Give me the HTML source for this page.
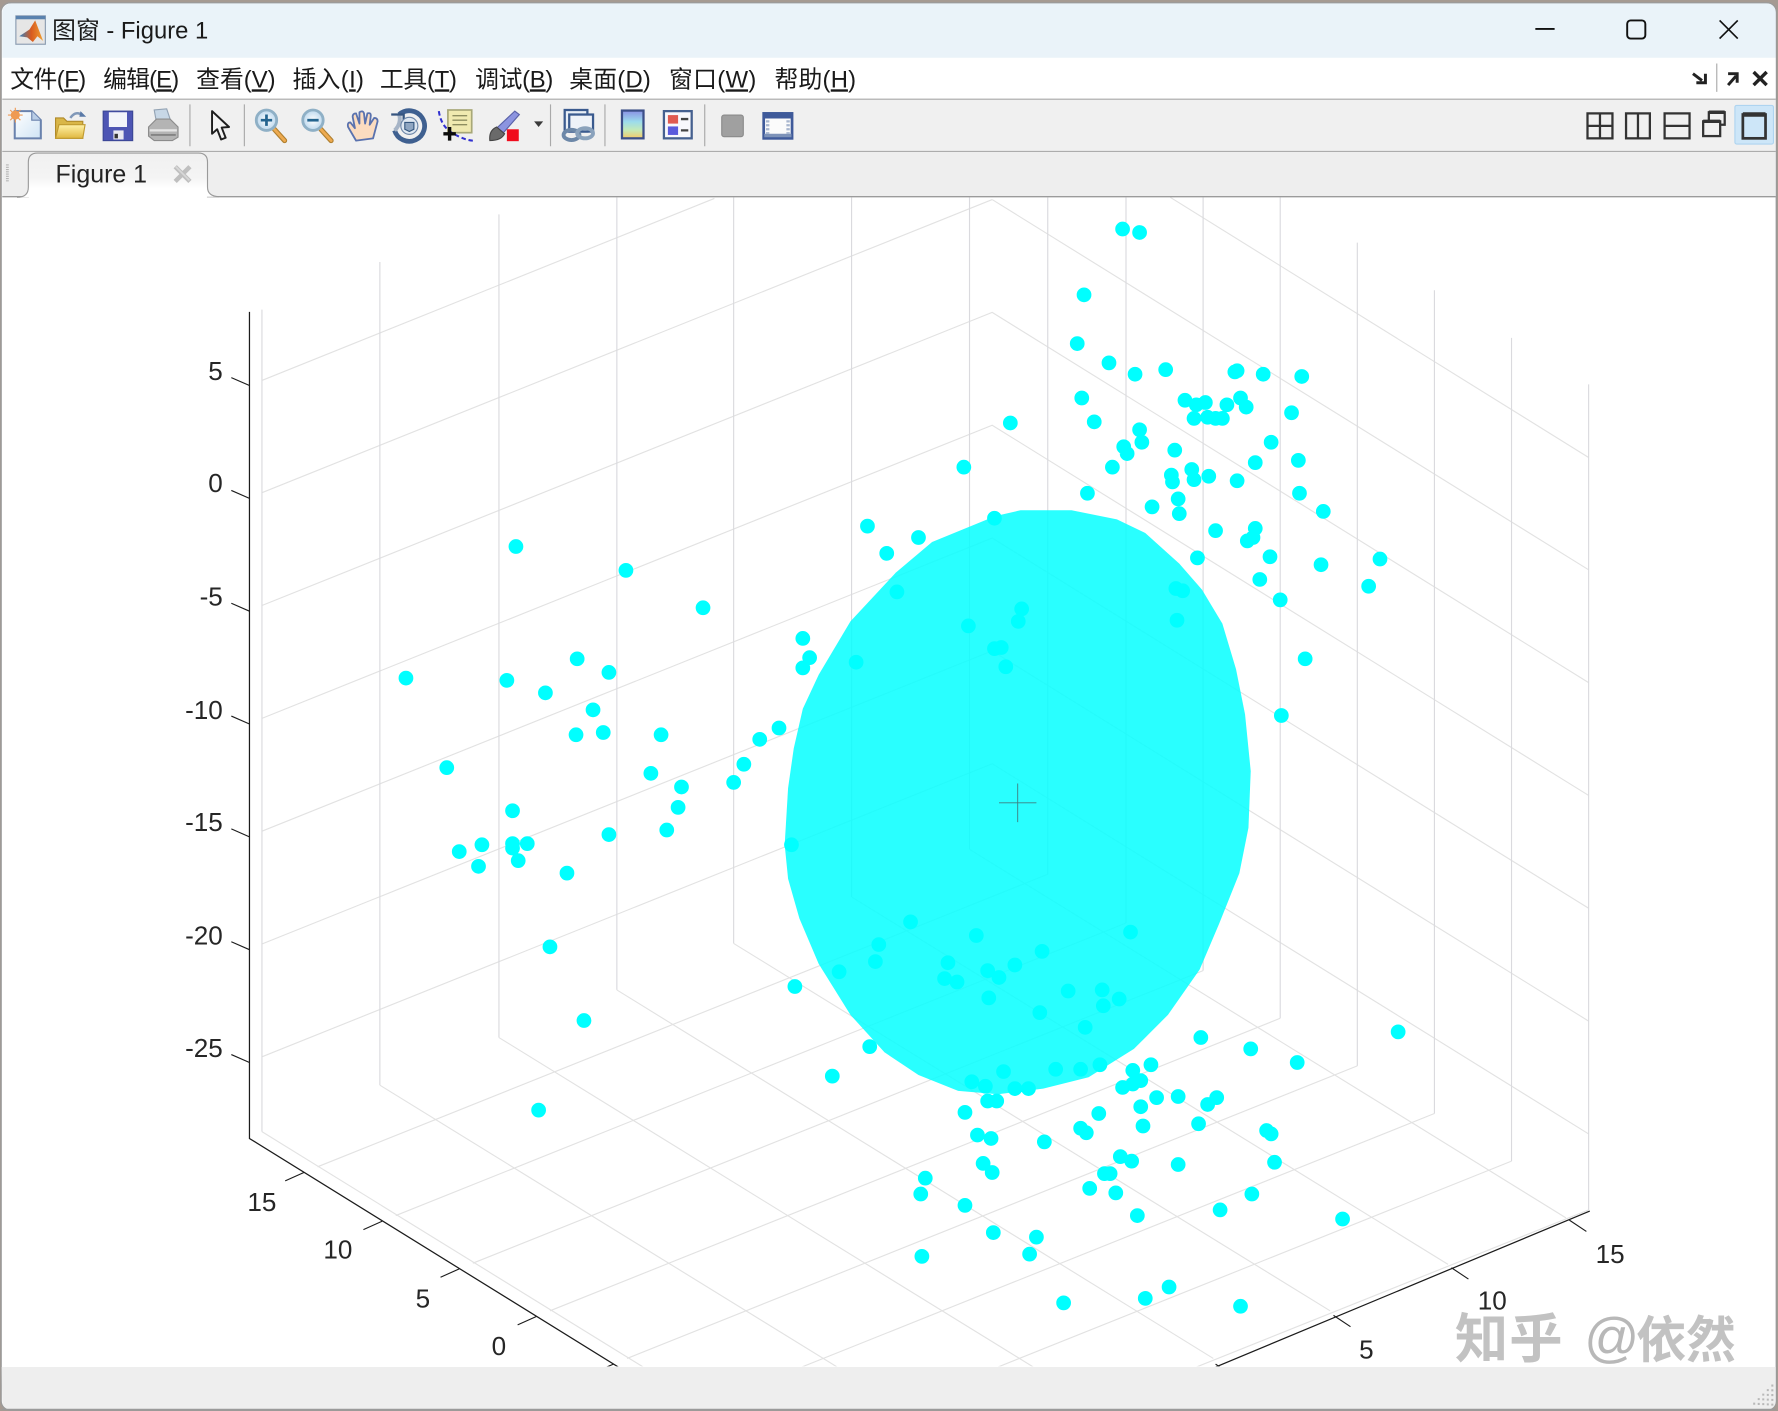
<!DOCTYPE html>
<html><head><meta charset="utf-8"><title>图窗 - Figure 1</title>
<style>html,body{margin:0;padding:0;background:#fff;width:1778px;height:1411px;overflow:hidden}svg{display:block}
text{font-family:"Liberation Sans","Noto Sans CJK SC",sans-serif}</style></head>
<body>
<svg xmlns="http://www.w3.org/2000/svg" width="1778" height="1411" viewBox="0 0 1568 1244.34">
<defs>
<clipPath id="plot"><rect x="0" y="174" width="1568" height="1031"/></clipPath>
<linearGradient id="tabg" x1="0" y1="0" x2="0" y2="1"><stop offset="0" stop-color="#f0f0f0"/><stop offset=".55" stop-color="#f4f4f4"/><stop offset=".8" stop-color="#fff"/></linearGradient>
<linearGradient id="cb" x1="0" y1="0" x2="0" y2="1"><stop offset="0" stop-color="#8a90e4"/><stop offset=".4" stop-color="#9cdcec"/><stop offset=".7" stop-color="#c4eab8"/><stop offset="1" stop-color="#f4c868"/></linearGradient>
<linearGradient id="doc" x1="0" y1="0" x2="1" y2="1"><stop offset="0" stop-color="#fff"/><stop offset="1" stop-color="#cfe4f5"/></linearGradient>
<linearGradient id="fold" x1="0" y1="0" x2="0" y2="1"><stop offset="0" stop-color="#fff2a8"/><stop offset="1" stop-color="#e0b840"/></linearGradient>
<linearGradient id="mat" x1="0" y1="0" x2="1" y2="0"><stop offset="0" stop-color="#2f7fc0"/><stop offset=".5" stop-color="#d85a20"/><stop offset="1" stop-color="#f0a030"/></linearGradient>
<radialGradient id="lens"><stop offset="0" stop-color="#fff"/><stop offset="1" stop-color="#bcd8ee"/></radialGradient>
</defs>
<rect width="1568" height="1244.34" fill="#a59a92"/>
<rect x="1" y="2.500" width="1565.500" height="1241" rx="8" fill="#fff" stroke="#9a9a9a" stroke-width="1.200"/>

<!-- plot -->
<g clip-path="url(#plot)" fill="none">
<g stroke="#e2e2e2" stroke-width="1">
<path d="M231 335.500L630 175M875 176L1401 502.500"/>
<path d="M231 434.500L875 176M231 534L875 275.500L1401 602M231 633.500L875 375L1401 701.500M231 733L875 474.500L1401 801M231 832.500L875 574L1401 900.500M231 932L875 673.500L1401 1000M1032 174L1401 403.500"/>
<path d="M924 771L280 1029M993 814L349 1072M1061 856L417 1114M1129 898L485 1156M1197 940L553 1198M1265 982L706 1206M1333 1024L879 1206M1401 1067L1054 1206"/>
<path d="M231 998L568 1206M335 957L739 1206M440 915L912 1206M544 873L1070 1198M647 832L1173 1156M751 791L1277 1115M855 749L1381 1074"/>
</g>
<path stroke="#dadade" stroke-width="1" d="M231 273V998M335 231V957M440 189V915M544 174V873M647 174V832M751 174V791M855 174V749M924 174V771M993 174V814M1061 174V856M1129 174V898M1197 214V940M1265 256V982M1333 298V1024M1401 339V1067"/>
<path stroke="#1c1c1c" stroke-width="1.100" d="M220 275V1004L546 1206M1402 1068L1071 1206"/>
<path stroke="#1c1c1c" stroke-width="1" d="M220 340L204 333M220 439.500L204 432.500M220 539L204 532M220 638.500L204 631.500M220 738L204 731M220 837.500L204 830.500M220 937L204 930M268 1034L251.500 1041.400M337 1077L320.500 1084.400M405 1119L388.500 1126.400M473 1161L456.500 1168.400M541 1203L534 1206M1384 1076L1399 1086M1280 1118L1295 1128M1176 1160L1191 1170M1072 1203L1076.500 1206"/>
<!-- dots -->
<path stroke="#00ffff" stroke-width="13" stroke-linecap="round" d="M990 202h0M1005 205h0M956 260h0M950 303h0M978 320h0M1001 330h0M1028 326h0M1089 328h0M1091 327h0M1114 330h0M1148 332h0M954 351h0M1045 353h0M1055 357h0M1063 355h0M1082 357h0M1094 351h0M1099 359h0M1139 364h0M965 372h0M1053 369h0M1065 368h0M1072 369h0M1078 369h0M1005 379h0M891 373h0M1121 390h0M991 394h0M1007 390h0M994 400h0M1036 397h0M1107 408h0M1145 406h0M981 412h0M850 412h0M1051 414h0M1033 419h0M1034 425h0M1053 423h0M1066 420h0M1091 424h0M1146 435h0M959 435h0M1039 440h0M1016 447h0M1040 453h0M1167 451h0M877 457h0M765 464h0M1072 468h0M1107 466h0M1105 474h0M1100 477h0M810 474h0M782 488h0M1120 491h0M1056 492h0M1217 493h0M1165 498h0M1111 511h0M1207 517h0M1037 519h0M1043 521h0M791 522h0M1129 529h0M901 537h0M898 548h0M854 552h0M1038 547h0M708 563h0M877 572h0M883 571h0M714 580h0M755 584h0M887 588h0M708 589h0M1151 581h0M1130 631h0M455 482h0M552 503h0M620 536h0M358 598h0M509 581h0M537 593h0M447 600h0M481 611h0M523 626h0M508 648h0M532 646h0M583 648h0M394 677h0M574 682h0M601 694h0M647 690h0M656 674h0M670 652h0M687 642h0M598 712h0M588 732h0M537 736h0M452 715h0M405 751h0M425 745h0M452 744h0M452 748h0M465 744h0M457 759h0M422 764h0M500 770h0M485 835h0M515 900h0M475 979h0M698 745h0M803 813h0M775 833h0M772 848h0M740 857h0M701 870h0M861 825h0M836 849h0M919 839h0M997 822h0M895 851h0M871 856h0M881 862h0M833 863h0M844 866h0M872 880h0M942 874h0M972 873h0M987 881h0M973 887h0M917 893h0M957 906h0M767 923h0M734 949h0M1233 910h0M1059 915h0M1103 925h0M1144 937h0M1015 939h0M999 944h0M970 939h0M953 943h0M931 943h0M885 945h0M857 954h0M1006 953h0M999 956h0M990 959h0M869 958h0M895 960h0M907 960h0M1020 968h0M1039 967h0M1073 968h0M1065 974h0M1006 976h0M871 971h0M879 971h0M851 981h0M969 982h0M1057 991h0M1008 993h0M953 995h0M958 999h0M1117 997h0M1121 1000h0M862 1001h0M874 1004h0M921 1007h0M867 1026h0M875 1034h0M988 1020h0M998 1024h0M1039 1027h0M1124 1025h0M974 1035h0M979 1035h0M816 1039h0M812 1053h0M961 1048h0M984 1052h0M1104 1053h0M851 1063h0M1076 1067h0M1003 1072h0M1184 1075h0M876 1087h0M914 1091h0M908 1106h0M813 1108h0M938 1149h0M1010 1145h0M1031 1135h0M1094 1152h0"/>
<!-- ellipsoid -->
<path fill="#00ffff" fill-opacity=".84" stroke="none" d="M878 455L900 450L945 450L985 458L1010 470L1040 497L1060 520L1078 550L1090 590L1098 630L1103 680L1101 730L1093 770L1075 815L1058 855L1030 895L1000 925L960 950L920 960L880 965L845 962L810 948L780 928L750 895L722 850L705 810L695 775L692 745L695 695L700 660L708 625L722 595L750 548L790 505L822 478Z"/>
<path stroke="#3f7f80" stroke-width=".8" d="M881 708H914M897.500 691V725"/>
</g>

<!-- tick labels -->
<g fill="#262626" font-size="23">
<g text-anchor="end"><text x="196.500" y="335">5</text><text x="196.500" y="434">0</text><text x="196.500" y="534">-5</text><text x="196.500" y="634">-10</text><text x="196.500" y="733">-15</text><text x="196.500" y="833">-20</text><text x="196.500" y="932">-25</text></g>
<g text-anchor="middle"><text x="231" y="1068">15</text><text x="298" y="1110">10</text><text x="373" y="1153">5</text><text x="440" y="1195">0</text><text x="1420" y="1114">15</text><text x="1316" y="1155">10</text><text x="1205" y="1198">5</text></g>
</g>
<!-- watermark -->
<g fill="#c2c2c2">
<text x="1283" y="1197" font-size="47" letter-spacing="1" font-weight="700">知乎</text>
<text x="1397" y="1196" font-size="48" fill="#b8b8b8">@</text>
<text x="1443" y="1197" font-size="44" font-weight="700">依然</text>
</g>

<!-- status -->
<path d="M1.500 1205.500H1566V1236a7 7 0 0 1-7 7H9a7 7 0 0 1-7-7Z" fill="#eeeeee"/>
<path d="M1.500 1243H1566" stroke="#9a9a9a" stroke-width="1.200"/>
<g stroke="#b8b8b8" stroke-width="1.800" stroke-dasharray="1.800 2.400" fill="none"><path d="M1563 1221V1240M1559 1225V1240M1555 1229V1240M1551 1233V1240M1547 1237V1240"/></g>

<!-- title bar -->
<path d="M2 51V11a8 8 0 0 1 8-8H1558a8 8 0 0 1 8 8V51Z" fill="#eaf3f9"/>
<rect x="14" y="14" width="26" height="25" fill="#e6e6e6" stroke="#8a9bb0"/>
<rect x="14" y="14" width="26" height="3" fill="#5a82ae"/>
<path d="M17 32L26 26L31 18L38 36L33 32L29 37L24 33Z" fill="url(#mat)"/>
<text x="46" y="34" font-size="21" fill="#1a1a1a">图窗 - Figure 1</text>
<path d="M1354 25.500H1371" stroke="#111" stroke-width="1.700"/>
<rect x="1435" y="18" width="16" height="16" rx="3" fill="none" stroke="#111" stroke-width="1.700"/>
<path d="M1516.500 18L1532.500 34M1532.500 18L1516.500 34" stroke="#111" stroke-width="1.500"/>

<!-- menu -->
<rect x="2" y="51" width="1564" height="36" fill="#fff"/>
<g font-size="21" fill="#1a1a1a">
<text x="9" y="77" textLength="67">文件(<tspan text-decoration="underline">F</tspan>)</text>
<text x="91" y="77" textLength="67">编辑(<tspan text-decoration="underline">E</tspan>)</text>
<text x="173" y="77" textLength="70">查看(<tspan text-decoration="underline">V</tspan>)</text>
<text x="258" y="77" textLength="63">插入(<tspan text-decoration="underline">I</tspan>)</text>
<text x="335" y="77" textLength="68">工具(<tspan text-decoration="underline">T</tspan>)</text>
<text x="419" y="77" textLength="69">调试(<tspan text-decoration="underline">B</tspan>)</text>
<text x="502" y="77" textLength="72">桌面(<tspan text-decoration="underline">D</tspan>)</text>
<text x="590" y="77" textLength="77">窗口(<tspan text-decoration="underline">W</tspan>)</text>
<text x="683" y="77" textLength="72">帮助(<tspan text-decoration="underline">H</tspan>)</text>
</g>
<g fill="none" stroke="#222">
<path d="M1493 65L1501 71M1504 65V73H1496" stroke-width="2.600"/>
<path d="M1514 56V81" stroke="#aaa" stroke-width="1"/>
<path d="M1524 75L1531 67M1524 65H1532V73" stroke-width="2.600"/>
<path d="M1546.500 63.500L1558 75M1558 63.500L1546.500 75" stroke-width="3"/>
</g>

<!-- toolbar -->
<rect x="2" y="87.500" width="1564" height="46" fill="#f0f0f0"/>
<path d="M2 87.500H1566M2 133.500H1566" stroke="#a8a8a8" stroke-width="1"/>
<g stroke="#a9a9a9" stroke-width="1"><path d="M167.500 92V129M215.500 92V129M485.500 92V129M533.500 92V129M621.500 92V129"/></g>

<!-- new -->
<path d="M13 98H28L36 106V122H13Z" fill="url(#doc)" stroke="#6a82ad" stroke-width="1.800"/><path d="M28 98V106H36" fill="#b9cde6" stroke="#6a82ad"/>
<circle cx="13.500" cy="101.500" r="4" fill="#f09a50"/><path d="M13.500 95V108M7 101.500H20M9 97L18 106M18 97L9 106" stroke="#ee9a55" stroke-width="1"/>
<!-- open -->
<path d="M49 122V104H56L59 107H73V122Z" fill="#d9b648" stroke="#b08a2a"/><path d="M49 122L52 110H75L73 122Z" fill="url(#fold)" stroke="#c09a30"/>
<path d="M62 104Q67 97 73 102" fill="none" stroke="#8098b8" stroke-width="2.200"/><path d="M71 98L76 103H70Z" fill="#5a7aa8"/>
<!-- save -->
<rect x="91" y="98" width="26" height="26" fill="#4d55b4" stroke="#3c4796"/><rect x="96" y="99" width="16" height="13" fill="#f2f4fa"/><rect x="100" y="115" width="9" height="8" fill="#e8e8f0"/><rect x="101" y="118" width="3" height="4" fill="#333"/>
<!-- print -->
<path d="M136 97L147 96L151 108H138Z" fill="#c7d7e6" stroke="#93a3b4"/><path d="M131 112L138 105H150L157 112V121L152 124H136L131 120Z" fill="#b4b4b4" stroke="#8c8c8c"/><path d="M132 115H156" stroke="#e6e6e6" stroke-width="2"/><path d="M133 119H155" stroke="#7d7d7d" stroke-width="1.500"/>
<!-- arrow -->
<path d="M187 98L187 118L191.500 114L195 123L199 121.500L195.500 112.500L202 112Z" fill="#f4f4f4" stroke="#1e1e1e" stroke-width="1.700" stroke-linejoin="round"/>
<!-- zoom in -->
<path d="M242 114L251 124" stroke="#b08030" stroke-width="4.500" stroke-linecap="round"/><path d="M242 114L251 124" stroke="#eeaa50" stroke-width="2.500" stroke-linecap="round"/>
<circle cx="235" cy="106" r="9" fill="url(#lens)" stroke="#8fb0c6" stroke-width="2.500"/><path d="M230 106H240M235 101V111" stroke="#24648f" stroke-width="2.400"/>
<!-- zoom out -->
<path d="M283 114L292 124" stroke="#b08030" stroke-width="4.500" stroke-linecap="round"/><path d="M283 114L292 124" stroke="#eeaa50" stroke-width="2.500" stroke-linecap="round"/>
<circle cx="276" cy="106" r="9" fill="url(#lens)" stroke="#8fb0c6" stroke-width="2.500"/><path d="M271 106H281" stroke="#24648f" stroke-width="2.400"/>
<!-- hand -->
<path d="M314 124L307 112Q306 108 309 108L313 113L311 103Q311 100 314 100L317 109L317 99Q320 97 321 100L322 109L324 100Q327 99 327 102L326 110L330 104Q333 104 333 107L329 122Z" fill="#fbdcc0" stroke="#5a72ae" stroke-width="1.600" stroke-linejoin="round"/>
<!-- rotate -->
<path d="M352 101A13.500 13.500 0 1 1 348 115" fill="none" stroke="#3f6090" stroke-width="4.200"/><path d="M348 115A13.500 13.500 0 0 0 352 101" fill="none" stroke="#a6b4c6" stroke-width="3.500"/><path d="M345 101H356V106" fill="none" stroke="#36557f" stroke-width="2"/>
<circle cx="361" cy="111" r="7.500" fill="#dfe8f2" stroke="#6d86a8"/><path d="M357 108H365V114L361 116L357 114Z" fill="#8fa6c2" stroke="#35577f"/>
<!-- datatip -->
<rect x="395" y="97" width="21" height="20" fill="#f0eab0" stroke="#a8a878" stroke-width="1.500"/><path d="M399 102H412M399 106H412M399 110H412" stroke="#8e8e60" stroke-width="1.200"/>
<path d="M387 98Q389 112 400 118T417 124" fill="none" stroke="#3030d0" stroke-width="1.800" stroke-dasharray="4 2.500"/>
<path d="M391 118H402M396.500 112V124" stroke="#0c0c0c" stroke-width="3"/>
<!-- brush -->
<path d="M438 113L454 98L458 101L444 117Z" fill="#8c94e0" stroke="#5a62a8"/><path d="M432 124Q431 115 438 112L445 118Q442 124 432 124Z" fill="#6a6a6a" stroke="#444"/>
<rect x="447" y="114" width="10.500" height="10.500" fill="#f00c1c"/>
<path d="M471 107H479L475 112Z" fill="#3a3a3a"/>
<!-- link -->
<rect x="498" y="97" width="20" height="19" fill="#e8eef6" stroke="#3a5a8e" stroke-width="2"/><rect x="502" y="101" width="21" height="15" fill="#eef2f8" stroke="#3a5a8e" stroke-width="2"/>
<ellipse cx="504" cy="119" rx="7" ry="4.500" fill="none" stroke="#6d88a8" stroke-width="3.400"/><ellipse cx="516" cy="117.500" rx="7" ry="4.500" fill="none" stroke="#8aa2bc" stroke-width="3.400"/>
<!-- colorbar -->
<rect x="548.500" y="97.500" width="19" height="24.500" fill="url(#cb)" stroke="#3c4f88" stroke-width="2"/>
<!-- legend -->
<rect x="585.500" y="98" width="24.500" height="24" fill="#f8f8fc" stroke="#45608f" stroke-width="2"/>
<rect x="589" y="101.500" width="9" height="7.500" fill="#e05a50"/><rect x="589" y="111.500" width="9" height="7.500" fill="#5a5adc"/>
<path d="M600.500 105H607M600.500 115H607" stroke="#444" stroke-width="2"/>
<!-- box -->
<rect x="636.500" y="101.500" width="19" height="19" rx="2" fill="#a0a0a0" stroke="#8a8a8a"/>
<!-- plot -->
<rect x="673.500" y="100" width="25" height="22" fill="#fbfbfb" stroke="#3f5a9a" stroke-width="2.400"/><path d="M674 102.500H698" stroke="#3f5a9a" stroke-width="4"/><path d="M677 106V118M695 106V118" stroke="#a8b6ce" stroke-width="3" stroke-dasharray="2 1.500"/><path d="M674 119.500H698" stroke="#7d92b8" stroke-width="3"/>

<!-- right toolbar -->
<rect x="1530" y="93" width="34" height="34" rx="1.500" fill="#cde6f8" stroke="#aed4f0"/>
<g fill="none" stroke="#333" stroke-width="2">
<rect x="1400" y="100" width="22" height="22"/><path d="M1411 100V122M1400 111H1422"/>
<rect x="1434" y="100" width="21" height="22"/><path d="M1444.500 100V122"/>
<rect x="1468" y="100" width="22" height="22"/><path d="M1468 111H1490"/>
<rect x="1507" y="99" width="14" height="11"/><rect x="1502" y="107" width="15" height="13" fill="#f0f0f0"/>
<path d="M1507 99H1521" stroke-width="3"/><path d="M1502 107H1517" stroke-width="3"/>
<rect x="1537" y="101" width="20" height="21" stroke-width="2.400"/><path d="M1537 101H1557" stroke-width="4"/>
</g>

<!-- tab strip -->
<rect x="2" y="134" width="1564" height="39" fill="#eeeeee"/>
<path d="M2 173.500H1566" stroke="#9b9b9b" stroke-width="1.200"/>
<path d="M6.500 145V161" stroke="#b5b5b5" stroke-width="2.500" stroke-dasharray="1 1"/>
<path d="M15 174Q25 174 25 165V143Q25 135 33 135H175Q183 135 183 143V165Q183 173 193 173.500" fill="url(#tabg)" stroke="#9a9a9a" stroke-width="1"/>
<rect x="25.500" y="170" width="157" height="5" fill="#fff"/>
<text x="49" y="161" font-size="22" fill="#222">Figure 1</text>
<path d="M154.500 147L167.500 160M167.500 147L154.500 160" stroke="#bfbfbf" stroke-width="4"/>
<path d="M155 147L167 159" stroke="#d8d8d8" stroke-width="1.500"/>
</svg>
</body></html>
